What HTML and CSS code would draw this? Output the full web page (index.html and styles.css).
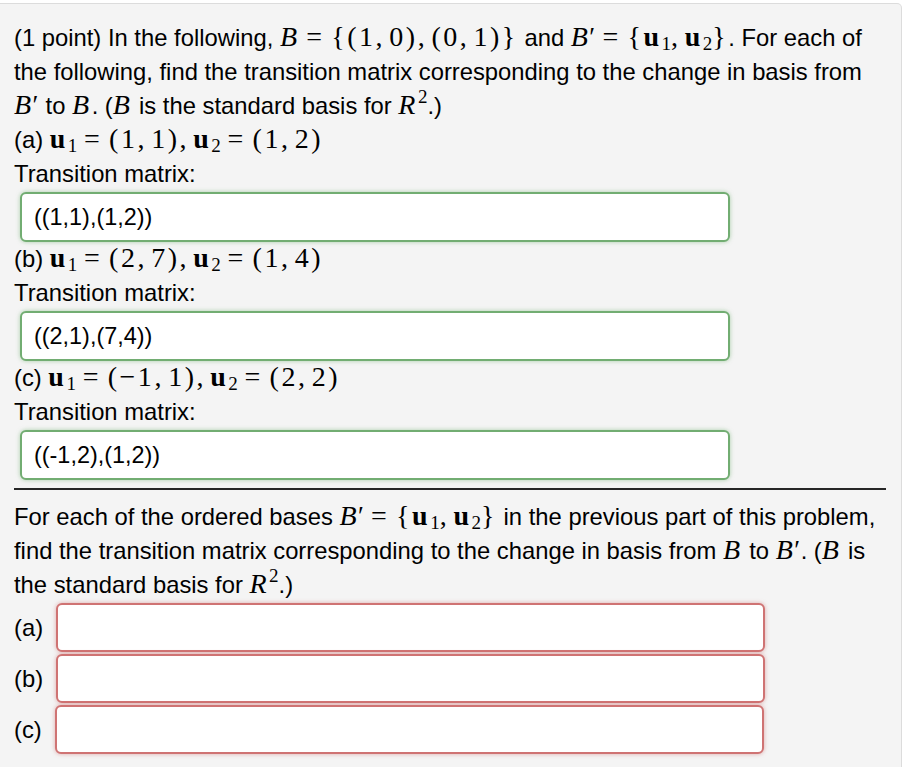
FILE: index.html
```html
<!DOCTYPE html>
<html lang="en">
<head>
<meta charset="utf-8">
<title>Transition matrix problem</title>
<link rel="stylesheet" href="styles.css">
</head>
<body>
<div class="panel">
  <p class="prose">(1 point) In the following, <span class="m"><i>B</i><span class="op">=</span>{(1<span class="c">,</span>0)<span class="c">,</span>(0<span class="c">,</span>1)}</span> and <span class="m"><i>B</i><span class="pr">′</span><span class="op">=</span>{<b>u</b><sub>1</sub><span class="c">,</span><b>u</b><sub>2</sub>}</span>. For each of<br>the following, find the transition matrix corresponding to the change in basis from<br><span class="m"><i>B</i><span class="pr">′</span></span> to <span class="m"><i>B</i></span>. (<span class="m"><i>B</i></span> is the standard basis for <span class="m"><i>R</i><sup>2</sup></span>.)</p>

  <div class="part">(a) <span class="m"><b>u</b><sub>1</sub><span class="op">=</span>(1<span class="c">,</span>1)<span class="c">,</span><b>u</b><sub>2</sub><span class="op">=</span>(1<span class="c">,</span>2)</span></div>
  <div class="label">Transition matrix:</div>
  <div class="answer"><input class="field ok" type="text" value="((1,1),(1,2))" readonly></div>

  <div class="part">(b) <span class="m"><b>u</b><sub>1</sub><span class="op">=</span>(2<span class="c">,</span>7)<span class="c">,</span><b>u</b><sub>2</sub><span class="op">=</span>(1<span class="c">,</span>4)</span></div>
  <div class="label">Transition matrix:</div>
  <div class="answer"><input class="field ok" type="text" value="((2,1),(7,4))" readonly></div>

  <div class="part">(c) <span class="m"><b>u</b><sub>1</sub><span class="op">=</span>(−1<span class="c">,</span>1)<span class="c">,</span><b>u</b><sub>2</sub><span class="op">=</span>(2<span class="c">,</span>2)</span></div>
  <div class="label">Transition matrix:</div>
  <div class="answer"><input class="field ok" type="text" value="((-1,2),(1,2))" readonly></div>

  <hr class="rule">

  <p class="prose">For each of the ordered bases <span class="m"><i>B</i><span class="pr">′</span><span class="op">=</span>{<b>u</b><sub>1</sub><span class="c">,</span><b>u</b><sub>2</sub>}</span> in the previous part of this problem,<br>find the transition matrix corresponding to the change in basis from <span class="m"><i>B</i></span> to <span class="m"><i>B</i><span class="pr">′</span></span>. (<span class="m"><i>B</i></span> is<br>the standard basis for <span class="m"><i>R</i><sup>2</sup></span>.)</p>

  <div class="row"><span class="tag">(a)</span><input class="field bad" type="text"></div>
  <div class="row"><span class="tag">(b)</span><input class="field bad" type="text"></div>
  <div class="row"><span class="tag">(c)</span><input class="field bad" type="text"></div>
</div>
</body>
</html>
```

FILE: styles.css
```css
html, body {
  margin: 0;
  background: #ffffff;
}

body {
  font-family: "Liberation Sans", Arial, sans-serif;
  font-size: 23.8px;
  line-height: 34px;
  color: #000;
}

.panel {
  margin: 3px 2px 0 0;
  min-height: 820px;
  background: #f4f4f4;
  border: 1px solid #dcdcdc;
  border-left: none;
  border-radius: 0 5px 0 0;
  padding: 17px 15px 20px 14px;
}

.prose {
  margin: 0;
  white-space: nowrap;
}

.part,
.label {
  margin: 0;
}

.answer {
  padding: 1px 0 0 6px;
  line-height: 0;
}

.field {
  box-sizing: border-box;
  height: 50px;
  padding: 0 12px;
  font-family: inherit;
  font-size: 23.4px;
  color: #000;
  background: #fff;
  border: 2px solid;
  border-radius: 6px;
  outline: none;
}

.field.ok {
  width: 710px;
  border-color: #72ad72;
  box-shadow: 0 0 4px rgba(110, 175, 110, 0.55);
}

.field.bad {
  width: 709px;
  height: 49px;
  border-color: #cf7373;
  box-shadow: 0 0 4px rgba(205, 110, 110, 0.55);
}

.rule {
  margin: 8px 0 10px;
  border: none;
  border-top: 2px solid #262626;
  height: 0;
}

.row {
  display: flex;
  align-items: center;
  gap: 13px;
}

.row .field {
  margin: 1px 0;
}

.tag {
  line-height: 34px;
}

/* math */
.m {
  font-family: "Liberation Serif", "Times New Roman", serif;
  font-size: 28px;
  letter-spacing: 0.09em;
  line-height: 1;
  white-space: nowrap;
}

.m i {
  font-style: italic;
}

.m b {
  font-weight: bold;
}

.m .op {
  margin: 0 0.24em;
}

.m .c {
  margin-right: 0.15em;
}

.m .pr {
  font-size: 0.95em;
  letter-spacing: 0.02em;
  margin-left: -0.04em;
}

.m sub,
.m sup {
  font-size: 0.68em;
  line-height: 0;
  letter-spacing: 0;
}

.m sub {
  vertical-align: -0.22em;
}

.m sup {
  vertical-align: 0.6em;
}
```
